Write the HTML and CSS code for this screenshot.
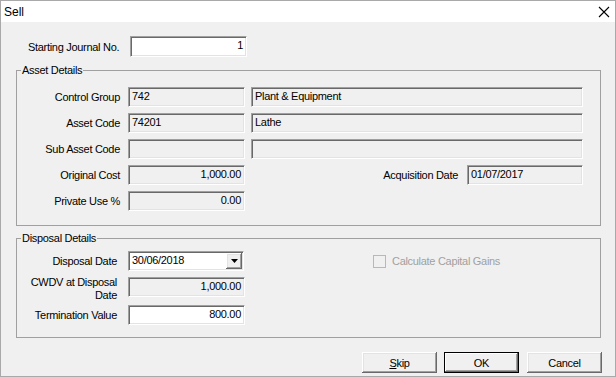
FILE: index.html
```html
<!doctype html>
<html>
<head>
  <meta charset='utf-8'>
  <title>Sell</title>
  <link rel="stylesheet" href="styles.css">
</head>
<body>
<div class='window'>
  <div class='titlebar'>
    <span class='title'>Sell</span>
    <svg class='close' width='12' height='12' viewBox='0 0 12 12'><path d='M1 1L11 11M11 1L1 11' stroke='#000' stroke-width='1.1' fill='none'/></svg>
  </div>
  <div class='content'>
    <div class='jrow'>
      <label class='jlbl'>Starting Journal No.</label>
      <div class='box edit num jbox'>1</div>
    </div>

    <fieldset class='group asset'>
      <legend>Asset Details</legend>
      <div class='row'>
        <label class='lbl'>Control Group</label>
        <div class='box ro b1'>742</div>
        <div class='box ro b2'>Plant &amp; Equipment</div>
      </div>
      <div class='row'>
        <label class='lbl'>Asset Code</label>
        <div class='box ro b1'>74201</div>
        <div class='box ro b2'>Lathe</div>
      </div>
      <div class='row'>
        <label class='lbl'>Sub Asset Code</label>
        <div class='box ro b1'></div>
        <div class='box ro b2'></div>
      </div>
      <div class='row'>
        <label class='lbl'>Original Cost</label>
        <div class='box ro num b1'>1,000.00</div>
        <div class='acq'>
          <label class='acqlbl'>Acquisition Date</label>
          <div class='box ro acqbox'>01/07/2017</div>
        </div>
      </div>
      <div class='row'>
        <label class='lbl'>Private Use %</label>
        <div class='box ro num b1'>0.00</div>
      </div>
    </fieldset>

    <fieldset class='group disposal'>
      <legend>Disposal Details</legend>
      <div class='row'>
        <label class='lbl'>Disposal Date</label>
        <div class='box edit combo'>
          <span>30/06/2018</span>
          <span class='drop'><svg width='7' height='4' viewBox='0 0 7 4'><path d='M0 0H7L3.5 4Z' fill='#000'/></svg></span>
        </div>
        <div class='check'>
          <span class='cbox'></span>
          <span class='clbl'>Calculate Capital Gains</span>
        </div>
      </div>
      <div class='row tall'>
        <label class='lbl two'>CWDV at Disposal<br>Date</label>
        <div class='box ro num b1'>1,000.00</div>
      </div>
      <div class='row last'>
        <label class='lbl'>Termination Value</label>
        <div class='box edit num b1'>800.00</div>
      </div>
    </fieldset>

    <div class='buttons'>
      <button class='btn'><u>S</u>kip</button>
      <button class='btn def'>OK</button>
      <button class='btn'>Cancel</button>
    </div>
  </div>
</div>
</body>
</html>
```

FILE: styles.css
```css
*{margin:0;padding:0;box-sizing:border-box;}
body{font-family:"Liberation Sans",Arial,sans-serif;font-size:11px;letter-spacing:-0.3px;color:#000;background:#fff;}
.window{width:616px;height:377px;border:1px solid #a9a9a9;background:#f0f0f0;overflow:hidden;}
.titlebar{height:21px;background:#fff;display:flex;justify-content:space-between;align-items:center;padding:0 5px 0 3px;}
.title{font-size:12px;letter-spacing:0;}
.close{margin-top:1px;}
.content{padding:14px 13px 0 15px;}
label{white-space:nowrap;}

.box{height:20px;line-height:17px;padding:0 3px;white-space:nowrap;overflow:hidden;
  border-top:1px solid #a0a0a0;border-left:1px solid #a0a0a0;border-bottom:1px solid #fff;border-right:1px solid #fff;
  box-shadow:inset 1px 1px #696969,inset -1px -1px #e3e3e3;}
.ro{background:#f0f0f0;}
.edit{background:#fff;}
.num{text-align:right;}

.jrow{display:flex;align-items:center;height:21px;padding-left:12px;}
.jlbl{width:102px;}
.jbox{width:117px;height:21px;}

.group{border:1px solid #a0a0a0;width:585px;}
.group legend{margin-left:4px;padding:0 1px;line-height:14px;}
.asset{margin-top:6px;padding:10px 0 14px 0;}
.disposal{margin-top:5px;padding:6px 0 12px 0;}

.row{display:flex;align-items:center;height:20px;margin-bottom:6px;}
.row:last-child{margin-bottom:0;}
.lbl{width:111px;text-align:right;padding-right:8px;}
.disposal .lbl{padding-right:11px;}
.b1{width:117px;}
.b2{width:332px;margin-left:6px;}
.acq{width:338px;display:flex;justify-content:flex-end;align-items:center;}
.acqlbl{padding-right:9px;}
.acqbox{width:116px;}

.combo{width:116px;display:flex;justify-content:space-between;padding-right:0;}
.drop{width:16px;height:16px;margin:1px 1px 0 0;background:#f0f0f0;display:flex;align-items:center;justify-content:center;
  box-shadow:inset -1px -1px #696969,inset 1px 1px #fff,inset -2px -2px #a0a0a0,inset 2px 2px #e3e3e3;}
.check{display:flex;align-items:center;margin-left:129px;color:#a0a0a0;}
.cbox{width:13px;height:13px;border:1px solid #b8b8b8;margin-right:6px;}

.row.tall{align-items:flex-start;height:26px;margin-bottom:2px;}
.lbl.two{line-height:13px;margin-top:-1px;}

.buttons{display:flex;justify-content:flex-end;gap:7px;margin-top:14px;}
.btn{width:75px;height:21px;font:inherit;letter-spacing:-0.3px;color:#000;background:#f0f0f0;border:none;
  box-shadow:inset -1px -1px #696969,inset 1px 1px #fff,inset -2px -2px #a0a0a0,inset 2px 2px #e3e3e3;}
.btn.def{box-shadow:inset 0 0 0 1px #000,inset -2px -2px #696969,inset 2px 2px #fff,inset -3px -3px #a0a0a0;}
.btn:last-child{margin-left:1px;}
```
